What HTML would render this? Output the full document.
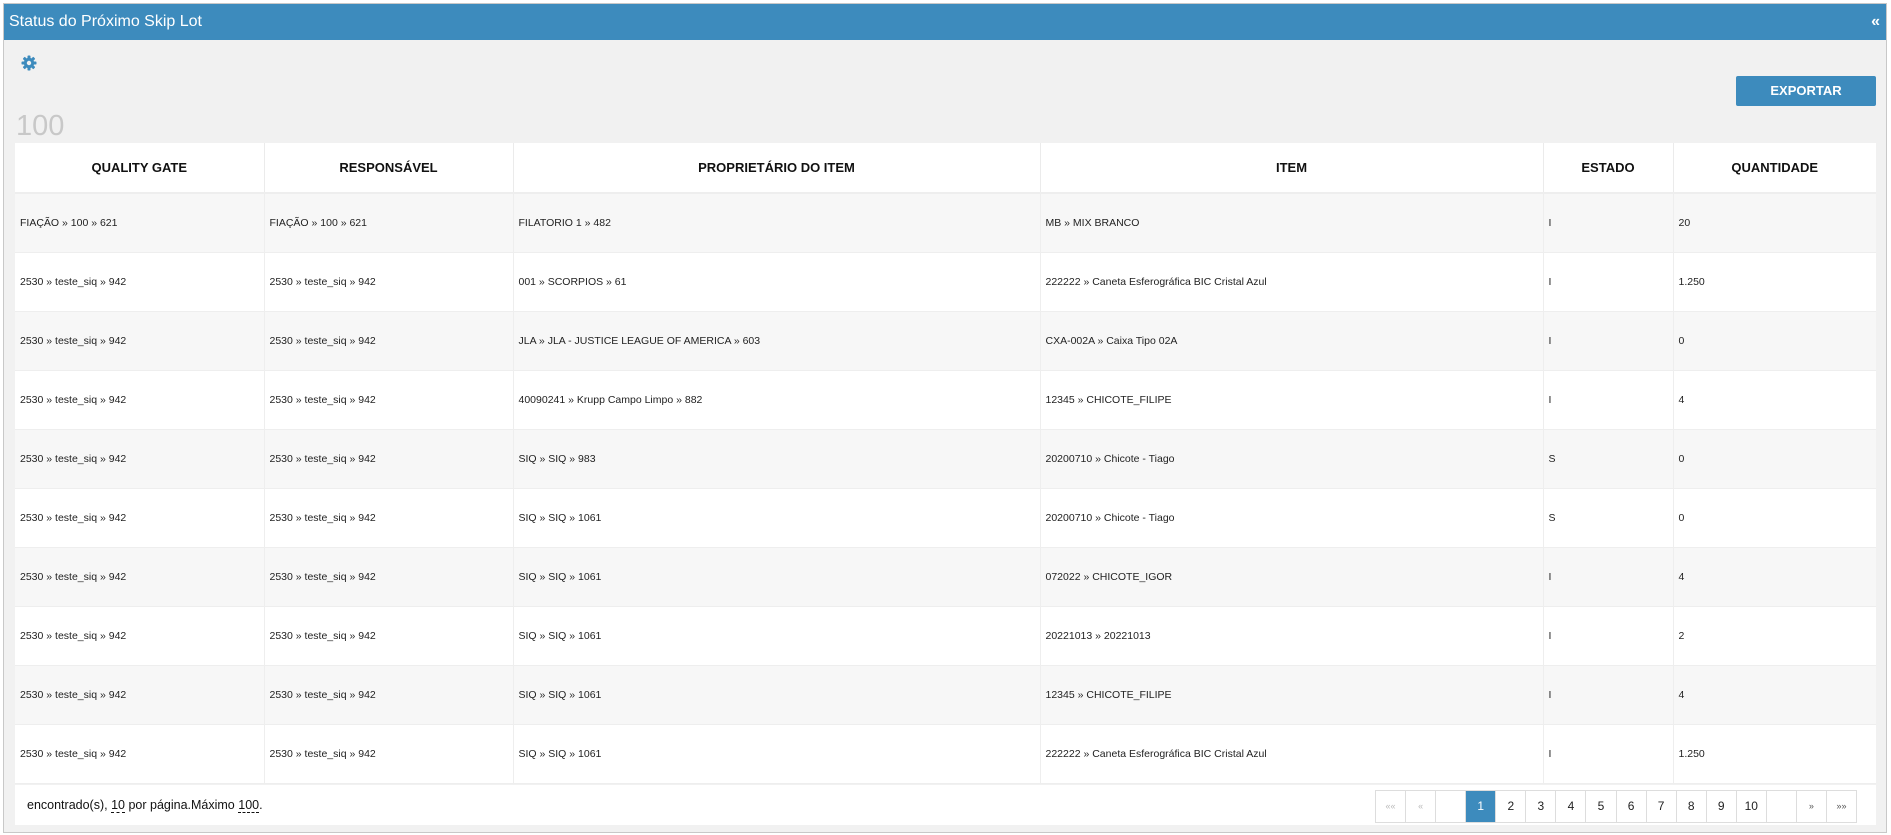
<!DOCTYPE html>
<html><head><meta charset="utf-8"><style>
*{box-sizing:border-box;margin:0;padding:0}
body{width:1891px;height:835px;background:#fff;font-family:"Liberation Sans",Arial,sans-serif;position:relative;overflow:hidden}
.frame{position:absolute;left:3px;top:3px;width:1884px;height:830px;border:1px solid #c8c8c8;background:#f1f1f1}
.hdr{position:absolute;left:4px;top:4px;width:1882px;height:36px;background:#3d8bbd;color:#fff;font-size:16px;line-height:36px;padding-left:5px}
.hdr .c{position:absolute;right:6px;top:0;font-size:16px;font-weight:bold}
.gear{position:absolute;left:21px;top:55px}
.exp{position:absolute;left:1736px;top:76px;width:140px;height:30px;background:#3d8bbd;color:#fff;font-weight:bold;font-size:13px;text-align:center;line-height:30px;border-radius:2px}
.cnt{position:absolute;left:16px;top:110px;font-size:29px;color:#c8c8c8}
table{position:absolute;left:15px;top:143px;width:1861px;border-collapse:collapse;background:#fff;table-layout:fixed}
th{height:50px;font-size:13px;font-weight:bold;color:#111;border-right:1px solid #ebebeb;border-bottom:2px solid #eee;text-align:center}
td{height:59px;font-size:10.5px;color:#222;padding-left:5px;border-right:1px solid #eee;border-bottom:1px solid #eee}
tr.o td{background:#f7f7f7}
th:last-child,td:last-child{border-right:none}
.foot{position:absolute;left:15px;top:785px;width:1861px;height:40px;background:#fff}
.foot .t{position:absolute;left:12px;top:13px;font-size:12.5px;color:#111}
.foot u{text-decoration:none;border-bottom:1px dashed #111}
.pg{position:absolute;left:1360px;top:5px;width:482px;display:flex;border:1px solid #ddd}
.pg span{flex:1 1 0;min-width:0;height:31px;border-right:1px solid #ddd;text-align:center;line-height:31px;font-size:12px;color:#222}
.pg span:last-child{border-right:none}
.pg .a{background:#3d8bbd;color:#fff}
.pg .g{color:#bbb;font-size:9px}
</style></head><body>
<div class="frame"></div>
<div class="hdr">Status do Próximo Skip Lot<span class="c">«</span></div>
<svg class="gear" width="16" height="16" viewBox="0 0 16 16"><g fill="#3d8bbd"><circle cx="8" cy="8" r="5.2"/><rect x="6.5" y="0.5" width="3" height="15" rx="0.8"/><rect x="0.5" y="6.5" width="15" height="3" rx="0.8"/><rect x="6.5" y="0.5" width="3" height="15" rx="0.8" transform="rotate(45 8 8)"/><rect x="6.5" y="0.5" width="3" height="15" rx="0.8" transform="rotate(-45 8 8)"/></g><circle cx="8" cy="8" r="2.2" fill="#f1f1f1"/></svg>
<div class="exp">EXPORTAR</div>
<div class="cnt">100</div>
<table>
<colgroup><col style="width:249px"><col style="width:249px"><col style="width:527px"><col style="width:503px"><col style="width:130px"><col></colgroup>
<tr><th>QUALITY GATE</th><th>RESPONSÁVEL</th><th>PROPRIETÁRIO DO ITEM</th><th>ITEM</th><th>ESTADO</th><th>QUANTIDADE</th></tr>
<tr class="o"><td>FIAÇÃO » 100 » 621</td><td>FIAÇÃO » 100 » 621</td><td>FILATORIO 1 » 482</td><td>MB » MIX BRANCO</td><td>I</td><td>20</td></tr>
<tr><td>2530 » teste_siq » 942</td><td>2530 » teste_siq » 942</td><td>001 » SCORPIOS » 61</td><td>222222 » Caneta Esferográfica BIC Cristal Azul</td><td>I</td><td>1.250</td></tr>
<tr class="o"><td>2530 » teste_siq » 942</td><td>2530 » teste_siq » 942</td><td>JLA » JLA - JUSTICE LEAGUE OF AMERICA » 603</td><td>CXA-002A » Caixa Tipo 02A</td><td>I</td><td>0</td></tr>
<tr><td>2530 » teste_siq » 942</td><td>2530 » teste_siq » 942</td><td>40090241 » Krupp Campo Limpo » 882</td><td>12345 » CHICOTE_FILIPE</td><td>I</td><td>4</td></tr>
<tr class="o"><td>2530 » teste_siq » 942</td><td>2530 » teste_siq » 942</td><td>SIQ » SIQ » 983</td><td>20200710 » Chicote - Tiago</td><td>S</td><td>0</td></tr>
<tr><td>2530 » teste_siq » 942</td><td>2530 » teste_siq » 942</td><td>SIQ » SIQ » 1061</td><td>20200710 » Chicote - Tiago</td><td>S</td><td>0</td></tr>
<tr class="o"><td>2530 » teste_siq » 942</td><td>2530 » teste_siq » 942</td><td>SIQ » SIQ » 1061</td><td>072022 » CHICOTE_IGOR</td><td>I</td><td>4</td></tr>
<tr><td>2530 » teste_siq » 942</td><td>2530 » teste_siq » 942</td><td>SIQ » SIQ » 1061</td><td>20221013 » 20221013</td><td>I</td><td>2</td></tr>
<tr class="o"><td>2530 » teste_siq » 942</td><td>2530 » teste_siq » 942</td><td>SIQ » SIQ » 1061</td><td>12345 » CHICOTE_FILIPE</td><td>I</td><td>4</td></tr>
<tr><td>2530 » teste_siq » 942</td><td>2530 » teste_siq » 942</td><td>SIQ » SIQ » 1061</td><td>222222 » Caneta Esferográfica BIC Cristal Azul</td><td>I</td><td>1.250</td></tr>
</table>
<div class="foot"><div class="t">encontrado(s), <u>10</u> por página.Máximo <u>100</u>.</div>
<div class="pg"><span class="g">««</span><span class="g">«</span><span></span><span class="a">1</span><span>2</span><span>3</span><span>4</span><span>5</span><span>6</span><span>7</span><span>8</span><span>9</span><span>10</span><span></span><span class="g" style="color:#555">»</span><span class="g" style="color:#555">»»</span></div></div>
</body></html>
